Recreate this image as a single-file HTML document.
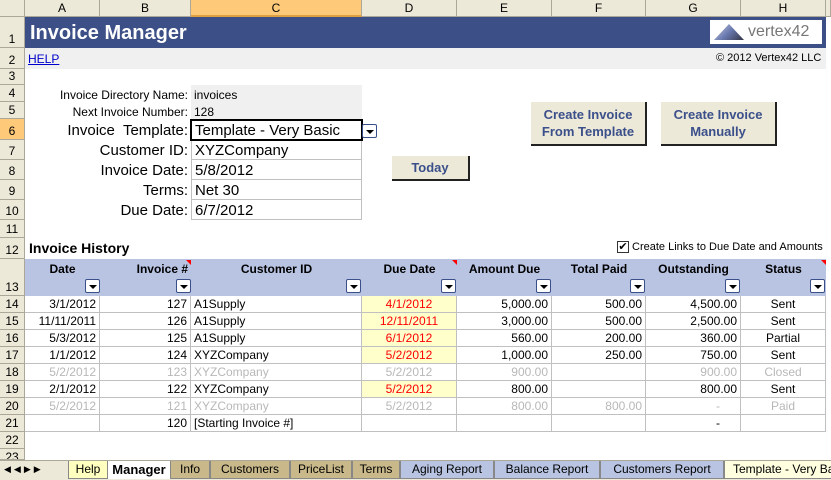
<!DOCTYPE html>
<html><head><meta charset="utf-8"><style>
*{margin:0;padding:0;box-sizing:border-box}
body{width:831px;height:480px;overflow:hidden;background:#fff;font-family:"Liberation Sans",Arial,sans-serif;font-size:12px;position:relative}
.a{position:absolute;white-space:nowrap}
.ch{position:absolute;top:0;height:17px;background:#ece9d8;border-right:1px solid #aca899;border-bottom:1px solid #aca899;text-align:center;line-height:17px;font-size:12px}
.rh{position:absolute;left:0;width:25px;background:#ece9d8;border-bottom:1px solid #aca899;border-right:1px solid #aca899;text-align:center;font-size:12px;display:flex;align-items:flex-end;justify-content:center;padding-bottom:1px;overflow:hidden;line-height:14px}
.r{text-align:right}
.btn{position:absolute;background:#ece9d8;border-right:2px solid #222;border-bottom:2px solid #222;color:#3b4f8a;font-weight:bold;text-align:center;font-size:13px;line-height:17px;display:flex;align-items:center;justify-content:center}
.dd{position:absolute;width:15px;height:14px;border:1px solid #3b4f8a;background:#fff;border-radius:2px}
.dd:after{content:"";position:absolute;left:3px;top:5px;border-left:4px solid transparent;border-right:4px solid transparent;border-top:4px solid #000}
.c{position:absolute;height:17px;line-height:16px;border-right:1px solid #c0c0c0;border-bottom:1px solid #c0c0c0;padding:0 3px;font-size:12px;white-space:nowrap;overflow:hidden}
.g{color:#b8b8b8}
.red{color:#f00}
.y{background:#ffffcc}
.tab{position:absolute;top:461px;height:18px;line-height:17px;font-size:12px;text-align:center;white-space:nowrap;overflow:hidden;border:1px solid #888;border-top:none}
</style></head><body>
<div class="ch" style="left:0;width:25px"></div>
<div class="ch" style="left:25px;width:75px">A</div>
<div class="ch" style="left:100px;width:91px">B</div>
<div class="ch" style="left:191px;width:171px;background:#ffc97a;border-bottom:2px solid #e0a040">C</div>
<div class="ch" style="left:362px;width:95px">D</div>
<div class="ch" style="left:457px;width:95px">E</div>
<div class="ch" style="left:552px;width:94px">F</div>
<div class="ch" style="left:646px;width:95px">G</div>
<div class="ch" style="left:741px;width:85px">H</div>
<div class="ch" style="left:826px;width:5px"></div>
<div class="rh" style="top:17px;height:31px">1</div>
<div class="rh" style="top:48px;height:21px">2</div>
<div class="rh" style="top:69px;height:16px">3</div>
<div class="rh" style="top:85px;height:17px">4</div>
<div class="rh" style="top:102px;height:17px">5</div>
<div class="rh" style="top:119px;height:21px;background:#ffc97a">6</div>
<div class="rh" style="top:140px;height:20px">7</div>
<div class="rh" style="top:160px;height:20px">8</div>
<div class="rh" style="top:180px;height:20px">9</div>
<div class="rh" style="top:200px;height:20px">10</div>
<div class="rh" style="top:220px;height:18px">11</div>
<div class="rh" style="top:238px;height:21px">12</div>
<div class="rh" style="top:259px;height:37px">13</div>
<div class="rh" style="top:296px;height:17px">14</div>
<div class="rh" style="top:313px;height:17px">15</div>
<div class="rh" style="top:330px;height:17px">16</div>
<div class="rh" style="top:347px;height:17px">17</div>
<div class="rh" style="top:364px;height:17px">18</div>
<div class="rh" style="top:381px;height:17px">19</div>
<div class="rh" style="top:398px;height:17px">20</div>
<div class="rh" style="top:415px;height:17px">21</div>
<div class="rh" style="top:432px;height:17px">22</div>
<div class="rh" style="top:449px;height:11px;align-items:flex-start;padding-top:1px">23</div>
<div class="a" style="left:25px;top:17px;width:801px;height:31px;background:#3c4f86"></div>
<div class="a" style="left:30px;top:19px;color:#fff;font-weight:bold;font-size:20px;line-height:28px">Invoice Manager</div>
<div class="a" style="left:710px;top:20px;width:112px;height:24px;background:#fff;color:#777;font-size:16px;line-height:24px;padding-left:38px">vertex42</div>
<div class="a" style="left:714px;top:24px;width:30px;height:16px;background:linear-gradient(135deg,#ccd 0,#6a7ab0 50%,#334 100%);clip-path:polygon(0 100%,50% 0,100% 100%)"></div>
<div class="a" style="left:25px;top:48px;width:801px;height:21px;background:#f0f0f0"></div>
<div class="a" style="left:28px;top:52px;color:#00c;text-decoration:underline;font-size:12px">HELP</div>
<div class="a" style="left:716px;top:52px;font-size:11px">© 2012 Vertex42 LLC</div>
<div class="a" style="left:191px;top:85px;width:171px;height:34px;background:#f0f0f0"></div>
<div class="a r" style="right:643px;top:88px;font-size:12px">Invoice Directory Name:</div>
<div class="a" style="left:194px;top:88px;font-size:12px">invoices</div>
<div class="a r" style="right:643px;top:105px;font-size:12px">Next Invoice Number:</div>
<div class="a" style="left:194px;top:105px;font-size:12px">128</div>
<div class="a r" style="right:643px;top:122px;font-size:15px">Invoice&nbsp; Template:</div>
<div class="a r" style="right:643px;top:142px;font-size:15px">Customer ID:</div>
<div class="a r" style="right:643px;top:162px;font-size:15px">Invoice Date:</div>
<div class="a r" style="right:643px;top:182px;font-size:15px">Terms:</div>
<div class="a r" style="right:643px;top:202px;font-size:15px">Due Date:</div>
<div class="a" style="left:191px;top:140px;width:171px;height:80px;border-right:1px solid #c0c0c0;border-left:1px solid #c0c0c0"></div>
<div class="a" style="left:191px;top:159px;width:171px;border-top:1px solid #c0c0c0"></div>
<div class="a" style="left:191px;top:179px;width:171px;border-top:1px solid #c0c0c0"></div>
<div class="a" style="left:191px;top:199px;width:171px;border-top:1px solid #c0c0c0"></div>
<div class="a" style="left:191px;top:219px;width:171px;border-top:1px solid #c0c0c0"></div>
<div class="a" style="left:190px;top:119px;width:173px;height:22px;border:2px solid #000"></div>
<div class="a" style="left:195px;top:122px;font-size:15px">Template - Very Basic</div>
<div class="dd" style="left:362px;top:124px"></div>
<div class="a" style="left:195px;top:142px;font-size:15px">XYZCompany</div>
<div class="a" style="left:195px;top:162px;font-size:15px">5/8/2012</div>
<div class="a" style="left:195px;top:182px;font-size:15px">Net 30</div>
<div class="a" style="left:195px;top:202px;font-size:15px">6/7/2012</div>
<div class="btn" style="left:392px;top:156px;width:78px;height:25px">Today</div>
<div class="btn" style="left:531px;top:102px;width:116px;height:44px">Create Invoice<br>From Template</div>
<div class="btn" style="left:661px;top:102px;width:116px;height:44px">Create Invoice<br>Manually</div>
<div class="a" style="left:29px;top:240px;font-weight:bold;font-size:14px">Invoice History</div>
<div class="a" style="left:617px;top:241px;width:12px;height:12px;border:1px solid #333;background:#fff;font-size:11px;line-height:10px;text-align:center">✔</div>
<div class="a" style="left:632px;top:241px;font-size:11px">Create Links to Due Date and Amounts</div>
<div class="a" style="left:25px;top:259px;width:801px;height:37px;background:#b8c4e2"></div>
<div class="a" style="left:25px;top:262px;width:75px;text-align:center;font-weight:bold">Date</div>
<div class="a" style="left:100px;top:262px;width:91px;text-align:right;padding-right:3px;font-weight:bold">Invoice #</div>
<div class="a" style="left:191px;top:262px;width:171px;text-align:center;font-weight:bold">Customer ID</div>
<div class="a" style="left:362px;top:262px;width:95px;text-align:center;font-weight:bold">Due Date</div>
<div class="a" style="left:457px;top:262px;width:95px;text-align:center;font-weight:bold">Amount Due</div>
<div class="a" style="left:552px;top:262px;width:94px;text-align:center;font-weight:bold">Total Paid</div>
<div class="a" style="left:646px;top:262px;width:95px;text-align:center;font-weight:bold">Outstanding</div>
<div class="a" style="left:741px;top:262px;width:85px;text-align:center;font-weight:bold">Status</div>
<div class="dd" style="left:85px;top:279px"></div>
<div class="dd" style="left:176px;top:279px"></div>
<div class="dd" style="left:346px;top:279px"></div>
<div class="dd" style="left:441px;top:279px"></div>
<div class="dd" style="left:536px;top:279px"></div>
<div class="dd" style="left:630px;top:279px"></div>
<div class="dd" style="left:725px;top:279px"></div>
<div class="dd" style="left:810px;top:279px"></div>
<div class="a" style="left:186px;top:260px;border-left:5px solid transparent;border-top:5px solid #f00"></div>
<div class="a" style="left:452px;top:260px;border-left:5px solid transparent;border-top:5px solid #f00"></div>
<div class="a" style="left:821px;top:260px;border-left:5px solid transparent;border-top:5px solid #f00"></div>
<div style="position:absolute;left:0;top:0">
<div class="c r" style="left:25px;top:296px;width:75px">3/1/2012</div><div class="c r" style="left:100px;top:296px;width:91px">127</div><div class="c" style="left:191px;top:296px;width:171px">A1Supply</div><div class="c y red" style="left:362px;top:296px;width:95px;text-align:center">4/1/2012</div><div class="c r" style="left:457px;top:296px;width:95px">5,000.00</div><div class="c r" style="left:552px;top:296px;width:94px">500.00</div><div class="c r" style="left:646px;top:296px;width:95px">4,500.00</div><div class="c" style="left:741px;top:296px;width:85px;text-align:center">Sent</div>
<div class="c r" style="left:25px;top:313px;width:75px">11/11/2011</div><div class="c r" style="left:100px;top:313px;width:91px">126</div><div class="c" style="left:191px;top:313px;width:171px">A1Supply</div><div class="c y red" style="left:362px;top:313px;width:95px;text-align:center">12/11/2011</div><div class="c r" style="left:457px;top:313px;width:95px">3,000.00</div><div class="c r" style="left:552px;top:313px;width:94px">500.00</div><div class="c r" style="left:646px;top:313px;width:95px">2,500.00</div><div class="c" style="left:741px;top:313px;width:85px;text-align:center">Sent</div>
<div class="c r" style="left:25px;top:330px;width:75px">5/3/2012</div><div class="c r" style="left:100px;top:330px;width:91px">125</div><div class="c" style="left:191px;top:330px;width:171px">A1Supply</div><div class="c y red" style="left:362px;top:330px;width:95px;text-align:center">6/1/2012</div><div class="c r" style="left:457px;top:330px;width:95px">560.00</div><div class="c r" style="left:552px;top:330px;width:94px">200.00</div><div class="c r" style="left:646px;top:330px;width:95px">360.00</div><div class="c" style="left:741px;top:330px;width:85px;text-align:center">Partial</div>
<div class="c r" style="left:25px;top:347px;width:75px">1/1/2012</div><div class="c r" style="left:100px;top:347px;width:91px">124</div><div class="c" style="left:191px;top:347px;width:171px">XYZCompany</div><div class="c y red" style="left:362px;top:347px;width:95px;text-align:center">5/2/2012</div><div class="c r" style="left:457px;top:347px;width:95px">1,000.00</div><div class="c r" style="left:552px;top:347px;width:94px">250.00</div><div class="c r" style="left:646px;top:347px;width:95px">750.00</div><div class="c" style="left:741px;top:347px;width:85px;text-align:center">Sent</div>
<div class="c r g" style="left:25px;top:364px;width:75px">5/2/2012</div><div class="c r g" style="left:100px;top:364px;width:91px">123</div><div class="c g" style="left:191px;top:364px;width:171px">XYZCompany</div><div class="c g" style="left:362px;top:364px;width:95px;text-align:center">5/2/2012</div><div class="c r g" style="left:457px;top:364px;width:95px">900.00</div><div class="c r g" style="left:552px;top:364px;width:94px"></div><div class="c r g" style="left:646px;top:364px;width:95px">900.00</div><div class="c g" style="left:741px;top:364px;width:85px;text-align:center">Closed</div>
<div class="c r" style="left:25px;top:381px;width:75px">2/1/2012</div><div class="c r" style="left:100px;top:381px;width:91px">122</div><div class="c" style="left:191px;top:381px;width:171px">XYZCompany</div><div class="c y red" style="left:362px;top:381px;width:95px;text-align:center">5/2/2012</div><div class="c r" style="left:457px;top:381px;width:95px">800.00</div><div class="c r" style="left:552px;top:381px;width:94px"></div><div class="c r" style="left:646px;top:381px;width:95px">800.00</div><div class="c" style="left:741px;top:381px;width:85px;text-align:center">Sent</div>
<div class="c r g" style="left:25px;top:398px;width:75px">5/2/2012</div><div class="c r g" style="left:100px;top:398px;width:91px">121</div><div class="c g" style="left:191px;top:398px;width:171px">XYZCompany</div><div class="c g" style="left:362px;top:398px;width:95px;text-align:center">5/2/2012</div><div class="c r g" style="left:457px;top:398px;width:95px">800.00</div><div class="c r g" style="left:552px;top:398px;width:94px">800.00</div><div class="c g" style="left:646px;top:398px;width:95px;text-align:right;padding-right:20px">-</div><div class="c g" style="left:741px;top:398px;width:85px;text-align:center">Paid</div>
<div class="c r" style="left:25px;top:415px;width:75px"></div><div class="c r" style="left:100px;top:415px;width:91px">120</div><div class="c" style="left:191px;top:415px;width:171px">[Starting Invoice #]</div><div class="c" style="left:362px;top:415px;width:95px"></div><div class="c" style="left:457px;top:415px;width:95px"></div><div class="c" style="left:552px;top:415px;width:94px"></div><div class="c" style="left:646px;top:415px;width:95px;text-align:right;padding-right:20px">-</div><div class="c" style="left:741px;top:415px;width:85px"></div>
</div>
<div class="a" style="left:0;top:460px;width:831px;height:20px;background:#ece9d8;border-top:1px solid #aca899"></div>
<div class="a" style="left:4px;top:464px;font-size:9px;letter-spacing:3px">◀◀▶▶</div>
<div class="tab" style="left:68px;width:40px;background:#ffffc0">Help</div>
<div class="tab" style="left:108px;width:62px;background:#fff;font-weight:bold;font-size:13px;border:none">Manager</div>
<div class="tab" style="left:170px;width:40px;background:#c8b88a">Info</div>
<div class="tab" style="left:210px;width:80px;background:#c8b88a">Customers</div>
<div class="tab" style="left:290px;width:62px;background:#c8b88a">PriceList</div>
<div class="tab" style="left:352px;width:48px;background:#c8b88a">Terms</div>
<div class="tab" style="left:400px;width:94px;background:#b8c4e2">Aging Report</div>
<div class="tab" style="left:494px;width:106px;background:#b8c4e2">Balance Report</div>
<div class="tab" style="left:600px;width:124px;background:#b8c4e2">Customers Report</div>
<div class="tab" style="left:724px;width:110px;background:#ffffe0;text-align:left;padding-left:8px">Template - Very Basic</div>
</body></html>
